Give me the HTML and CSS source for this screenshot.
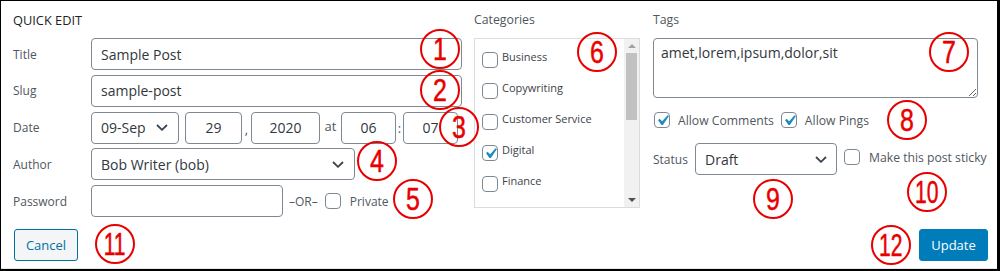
FILE: index.html
```html
<!DOCTYPE html>
<html lang="en">
<head>
<meta charset="utf-8">
<title>Quick Edit</title>
<link rel="stylesheet" href="styles.css">
</head>
<body>
<div class="frame">
  <div class="top">
    <div class="col col-main">
      <div class="heading legend">QUICK EDIT</div>
      <div class="fields">
        <div class="field"><span class="lbl">Title</span><div class="inp w-title">Sample Post</div></div>
        <div class="field"><span class="lbl">Slug</span><div class="inp w-title">sample-post</div></div>
        <div class="field"><span class="lbl">Date</span>
          <div class="inp sel w-month"><span>09-Sep</span><svg class="chev" width="12" height="7" viewBox="0 0 12 7"><polyline points="1,1 6,5.8 11,1" fill="none" stroke="#3c434a" stroke-width="1.8"/></svg></div>
          <div class="inp num w-day">29</div><span class="sep w-comma">,</span>
          <div class="inp num w-year">2020</div><span class="sep w-at">at</span>
          <div class="inp num w-hour">06</div><span class="sep w-colon">:</span>
          <div class="inp num w-hour">07</div>
        </div>
        <div class="field"><span class="lbl">Author</span>
          <div class="inp sel w-author"><span>Bob Writer (bob)</span><svg class="chev" width="12" height="7" viewBox="0 0 12 7"><polyline points="1,1 6,5.8 11,1" fill="none" stroke="#3c434a" stroke-width="1.8"/></svg></div>
        </div>
        <div class="field"><span class="lbl">Password</span>
          <div class="inp w-pass"></div>
          <span class="or">–OR–</span>
          <span class="cb cb-private"></span>
          <span class="private">Private</span>
        </div>
      </div>
    </div>

    <div class="col col-cats">
      <div class="heading">Categories</div>
      <div class="catbox">
        <ul class="catlist">
          <li><span class="cb"></span><span class="cat">Business</span></li>
          <li><span class="cb"></span><span class="cat">Copywriting</span></li>
          <li><span class="cb"></span><span class="cat">Customer Service</span></li>
          <li><span class="cb checked"><svg class="tick" width="21" height="21" viewBox="0 0 20 20"><path d="M14.83 4.89l1.34.94-5.81 8.38H9.02L5.78 9.67l1.34-1.25 2.57 2.4z" fill="#1e8cbe"/></svg></span><span class="cat">Digital</span></li>
          <li><span class="cb"></span><span class="cat">Finance</span></li>
        </ul>
        <div class="sb">
          <div class="sb-btn"><span class="arr-up"></span></div>
          <div class="sb-thumb"></div>
          <div class="sb-fill"></div>
          <div class="sb-btn"><span class="arr-down"></span></div>
        </div>
      </div>
    </div>

    <div class="col col-tags">
      <div class="heading">Tags</div>
      <textarea class="tags" readonly>amet,lorem,ipsum,dolor,sit</textarea>
      <div class="opts">
        <span class="cb checked"><svg class="tick" width="21" height="21" viewBox="0 0 20 20"><path d="M14.83 4.89l1.34.94-5.81 8.38H9.02L5.78 9.67l1.34-1.25 2.57 2.4z" fill="#1e8cbe"/></svg></span>
        <span class="opt-txt">Allow Comments</span>
        <span class="cb checked cb-pings"><svg class="tick" width="21" height="21" viewBox="0 0 20 20"><path d="M14.83 4.89l1.34.94-5.81 8.38H9.02L5.78 9.67l1.34-1.25 2.57 2.4z" fill="#1e8cbe"/></svg></span>
        <span class="opt-txt">Allow Pings</span>
      </div>
      <div class="status-row">
        <span class="lbl-status">Status</span>
        <div class="inp sel w-status"><span>Draft</span><svg class="chev" width="12" height="7" viewBox="0 0 12 7"><polyline points="1,1 6,5.8 11,1" fill="none" stroke="#3c434a" stroke-width="1.8"/></svg></div>
        <span class="cb cb-sticky"></span>
        <span class="opt-txt sticky-txt">Make this post sticky</span>
      </div>
    </div>
  </div>

  <div class="actions">
    <button class="btn">Cancel</button>
    <button class="btn primary">Update</button>
  </div>

  <div class="mark m1"><span>1</span></div>
  <div class="mark m2"><span>2</span></div>
  <div class="mark m3"><span>3</span></div>
  <div class="mark m4"><span>4</span></div>
  <div class="mark m5"><span>5</span></div>
  <div class="mark m6"><span>6</span></div>
  <div class="mark m7"><span>7</span></div>
  <div class="mark m8"><span>8</span></div>
  <div class="mark m9"><span>9</span></div>
  <div class="mark m10"><span>10</span></div>
  <div class="mark m11"><span>11</span></div>
  <div class="mark m12"><span>12</span></div>
</div>
</body>
</html>
```

FILE: styles.css
```css
html, body {
  margin: 0;
  padding: 0;
  background: #fff;
}
body {
  font-family: "Open Sans", "Noto Sans", sans-serif;
  color: #3c434a;
}
.frame {
  position: relative;
  box-sizing: border-box;
  width: 1000px;
  height: 271px;
  border-style: solid;
  border-color: #000;
  border-width: 1px 3px 2px 1px;
  background: #fff;
  box-shadow: inset 0 -1px 0 #e6e6e6;
}
.top {
  display: flex;
  height: 228px;
  padding-left: 11px;
}
.col { box-sizing: border-box; }
.col-main { width: 450px; margin-right: 12px; }
.col-cats { width: 166px; margin-right: 13px; }
.col-tags { flex: 1; }

.heading {
  padding-top: 9px;
  height: 20px;
  line-height: 20px;
  margin-bottom: 8px;
  font-size: 12.3px;
  color: #50575e;
}
.legend {
  padding-left: 1px;
  font-size: 12.8px;
  font-weight: 500;
  color: #1d2327;
}

.fields {
  display: flex;
  flex-direction: column;
  gap: 4.75px;
}
.field {
  display: flex;
  align-items: center;
  height: 32px;
}
.lbl {
  flex: none;
  width: 78px;
  padding-left: 1px;
  font-size: 12px;
  color: #50575e;
}
.inp {
  box-sizing: border-box;
  flex: none;
  height: 32px;
  border: 1px solid #7e8993;
  border-radius: 4px;
  background: #fff;
  padding: 0 9px;
  display: flex;
  align-items: center;
  font-size: 14px;
  color: #32373c;
  white-space: nowrap;
}
.sel { justify-content: space-between; padding-right: 10px; }
.chev { flex: none; }
.num { justify-content: center; padding: 0; }
.w-title { width: 371px; }
.w-month { width: 88px; margin-right: 6px; }
.w-day { width: 57px; }
.w-year { width: 69px; }
.w-hour { width: 55px; }
.w-author { width: 264px; }
.w-pass { width: 192px; }
.w-status { width: 142px; padding-right: 9px; }
.sep {
  flex: none;
  text-align: center;
  font-size: 13px;
  color: #50575e;
}
.w-comma { width: 9px; align-self: flex-end; margin-bottom: 6px; }
.w-at { width: 21px; margin-top: -4px; }
.w-colon { width: 7px; }
.or {
  margin-left: 6px;
  font-size: 12px;
  color: #50575e;
}
.cb {
  position: relative;
  flex: none;
  box-sizing: border-box;
  display: inline-block;
  width: 16px;
  height: 16px;
  border: 1px solid #7e8993;
  border-radius: 4px;
  background: #fff;
}
.tick {
  position: absolute;
  left: -3px;
  top: -3px;
}
.cb-private { margin-left: 7px; }
.private {
  margin-left: 9px;
  font-size: 12px;
  color: #50575e;
}

/* categories */
.catbox {
  box-sizing: border-box;
  height: 170px;
  border: 1px solid #dcdcde;
  display: flex;
}
.catlist {
  flex: 1;
  list-style: none;
  margin: 0;
  padding: 13px 0 0 7px;
}
.catlist li {
  display: flex;
  align-items: flex-start;
  height: 31px;
}
.cat {
  margin-left: 4px;
  margin-top: -3px;
  line-height: 16px;
  font-size: 11px;
  color: #3c434a;
}
.sb {
  flex: none;
  width: 15px;
  background: #f1f1f1;
  display: flex;
  flex-direction: column;
}
.sb-btn {
  height: 14px;
  display: flex;
  align-items: center;
  justify-content: center;
}
.sb-thumb {
  height: 67px;
  margin: 0 2px;
  background: #c1c1c1;
}
.sb-fill { flex: 1; }
.arr-up {
  width: 0; height: 0;
  border-left: 4px solid transparent;
  border-right: 4px solid transparent;
  border-bottom: 4px solid #a3a3a3;
}
.arr-down {
  width: 0; height: 0;
  border-left: 4px solid transparent;
  border-right: 4px solid transparent;
  border-top: 4px solid #505050;
}

/* tags */
.tags {
  display: block;
  box-sizing: border-box;
  width: 325px;
  height: 60px;
  margin: 0;
  padding: 4px 7px;
  border: 1px solid #7e8993;
  border-radius: 4px;
  font-family: "Open Sans", "Noto Sans", sans-serif;
  font-size: 14px;
  line-height: 20px;
  color: #32373c;
  outline: none;
}
.opts {
  display: flex;
  align-items: center;
  height: 16px;
  margin-top: 14px;
  padding-left: 1px;
}
.opt-txt {
  margin-left: 8px;
  font-size: 12.2px;
  color: #50575e;
}
.cb-pings { margin-left: 7px; }
.status-row {
  display: flex;
  align-items: center;
  height: 32px;
  margin-top: 15px;
}
.lbl-status {
  width: 42px;
  font-size: 12px;
  color: #50575e;
}
.cb-sticky { margin-left: 7px; margin-top: -4px; }
.sticky-txt { margin-left: 9px; margin-top: -4px; }

/* actions */
.actions {
  display: flex;
  justify-content: space-between;
  padding: 0 9px 0 13px;
}
.btn {
  box-sizing: border-box;
  height: 32px;
  width: 64px;
  margin: 0;
  padding: 0;
  border: 1px solid #0071a1;
  border-radius: 3px;
  background: #f3f5f6;
  color: #0071a1;
  font-family: "Open Sans", "Noto Sans", sans-serif;
  font-size: 13px;
}
.btn.primary {
  width: 69px;
  background: #007cba;
  border-color: #007cba;
  color: #fff;
}

/* annotations */
.mark {
  position: absolute;
  box-sizing: border-box;
  width: 40px;
  height: 40px;
  border: 2px solid #e80000;
  border-radius: 50%;
  display: flex;
  align-items: center;
  justify-content: center;
  font-family: "Liberation Sans", Arial, sans-serif;
  font-size: 32px;
  line-height: 1;
  color: #e80000;
}
.mark span {
  display: block;
  transform: scaleX(0.78);
  -webkit-text-stroke: 0.5px #e80000;
}
.m1 { left: 419px; top: 28px; }
.m2 { left: 419px; top: 69px; }
.m3 { left: 438px; top: 106px; }
.m4 { left: 356px; top: 140px; }
.m5 { left: 392px; top: 178px; }
.m6 { left: 576px; top: 31px; }
.m7 { left: 928px; top: 31px; }
.m8 { left: 886px; top: 99px; }
.m9 { left: 752px; top: 178px; }
.m10 { left: 906px; top: 171px; }
.m11 { left: 94px; top: 223px; }
.m12 { left: 870px; top: 224px; }
.m10 span, .m11 span, .m12 span { transform: scaleX(0.66); }
```
